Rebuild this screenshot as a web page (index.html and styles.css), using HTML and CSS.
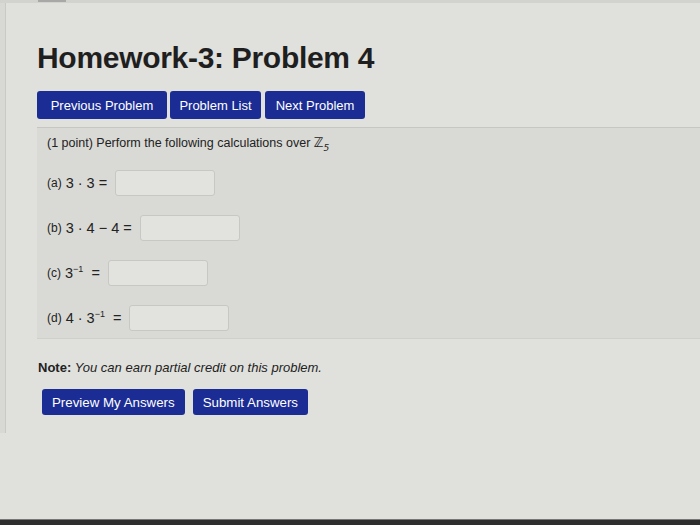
FILE: index.html
```html
<!DOCTYPE html>
<html lang="en">
<head>
    <meta charset="UTF-8">
    <meta name="viewport" content="width=device-width, initial-scale=1.0">
    <title>Homework-3: Problem 4</title>
    <link rel="stylesheet" href="styles.css">
</head>
<body>
    <div class="topbar"><span class="tab"></span></div>
    <div class="layout">
        <div class="rail"></div>
        <div class="main">
            <h1>Homework-3: Problem 4</h1>

            <div class="nav">
                <button class="btn prev">Previous Problem</button>
                <button class="btn list">Problem List</button>
                <button class="btn next">Next Problem</button>
            </div>

            <div class="problem">
                <p class="intro">(1 point) Perform the following calculations over <span class="ring">ℤ<sub>5</sub></span></p>

                <div class="row">
                    <span class="tag">(a)</span>
                    <span class="math">3 · 3 =</span>
                    <input type="text" class="answer">
                </div>
                <div class="row">
                    <span class="tag">(b)</span>
                    <span class="math">3 · 4 − 4 =</span>
                    <input type="text" class="answer">
                </div>
                <div class="row">
                    <span class="tag">(c)</span>
                    <span class="math">3<sup>−1</sup> &nbsp;=</span>
                    <input type="text" class="answer">
                </div>
                <div class="row">
                    <span class="tag">(d)</span>
                    <span class="math">4 · 3<sup>−1</sup> &nbsp;=</span>
                    <input type="text" class="answer">
                </div>
            </div>

            <p class="note"><b>Note:</b> <i>You can earn partial credit on this problem.</i></p>

            <div class="submit">
                <button class="btn">Preview My Answers</button>
                <button class="btn">Submit Answers</button>
            </div>
        </div>
    </div>
    <div class="bezel"></div>
</body>
</html>
```

FILE: styles.css
```css
body {
    font-family: 'Liberation Sans', Arial, Helvetica, sans-serif;
    margin: 0;
    padding: 0;
    height: 525px;
    display: flex;
    flex-direction: column;
    background-color: #e0e0dc;
    color: #222;
    overflow: hidden;
}

.topbar {
    height: 3px;
    background-color: #d2d2ce;
    padding-left: 38px;
}

.topbar .tab {
    display: block;
    width: 28px;
    height: 2px;
    background-color: #a8a8a6;
}

.layout {
    flex: 1;
    display: flex;
}

.rail {
    width: 5px;
    height: 430px;
    border-right: 1px solid #c9c9c5;
    background-color: #d8d8d4;
}

.main {
    flex: 1;
    padding-left: 31px;
}

h1 {
    margin: 38px 0 16px;
    font-size: 30px;
    font-weight: bold;
    color: #1f1f1f;
    letter-spacing: -0.3px;
}

.btn {
    font-family: 'Liberation Sans', Arial, sans-serif;
    background-color: #1b2c94;
    color: #fff;
    border: none;
    border-radius: 3px;
    font-size: 13px;
    padding: 0 11px;
    height: 28px;
    margin-right: 3px;
    white-space: nowrap;
}

.nav {
    display: flex;
    margin-bottom: 8px;
}

.nav .prev {
    width: 130px;
}

.nav .list {
    width: 91px;
    padding: 0;
}

.nav .next {
    width: 100px;
    padding: 0;
    margin-left: 1px;
}

.problem {
    background-color: #d9d9d5;
    border-top: 1px solid #c6c6c2;
    border-bottom: 1px solid #cfcfcb;
    padding: 6px 10px 8px;
    height: 196px;
}

.intro {
    margin: 0 0 13px;
    font-size: 12.5px;
    line-height: 18px;
}

.ring {
    font-family: 'DejaVu Sans', sans-serif;
    font-style: italic;
    font-size: 13px;
}

.ring sub {
    font-size: 9px;
}

.row {
    display: flex;
    align-items: center;
    height: 26px;
    margin-bottom: 19px;
}

.tag {
    font-size: 12px;
    margin-right: 4px;
}

.math {
    font-size: 14.5px;
    margin-right: 8px;
}

.math sup {
    font-size: 9px;
}

.answer {
    width: 98px;
    height: 24px;
    padding: 0;
    border: 1px solid #c7c7c3;
    border-radius: 3px;
    background-color: #e2e2de;
}

.note {
    margin: 21px 0 14px 1px;
    font-size: 13px;
}

.submit {
    display: flex;
    padding-left: 5px;
}

.submit .btn {
    margin-right: 8px;
    height: 26px;
    padding: 0 10px;
    font-size: 13.3px;
}

.bezel {
    height: 5px;
    background-color: #2e2e2e;
    border-top: 1px solid #777;
}
```
